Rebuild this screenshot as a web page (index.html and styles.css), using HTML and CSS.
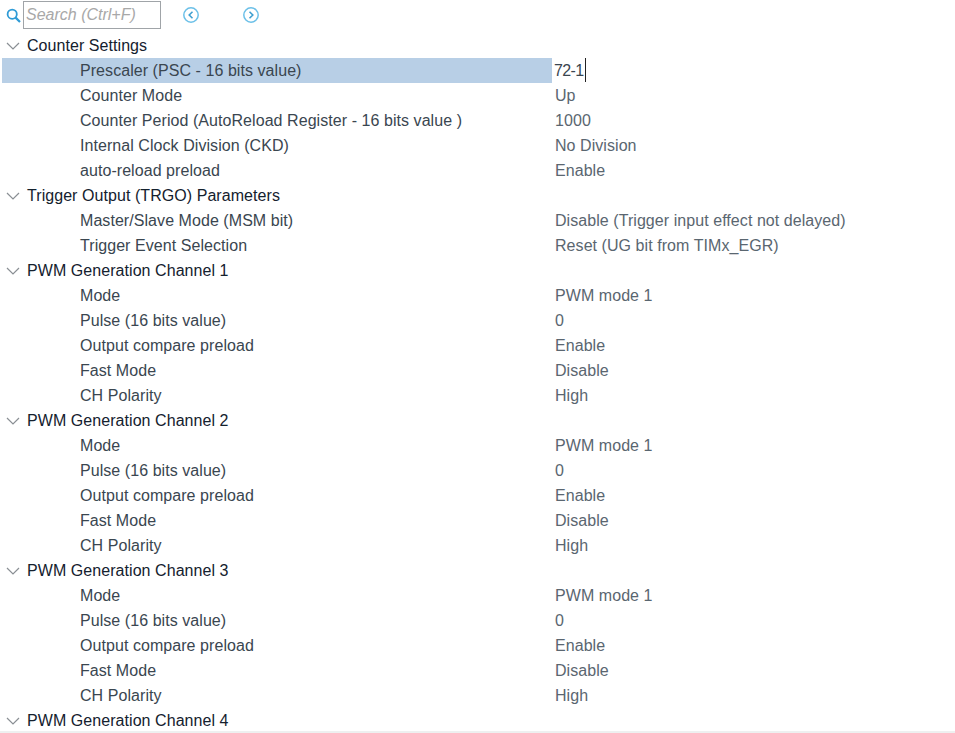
FILE: index.html
```html
<!DOCTYPE html>
<html lang="en">
<head>
    <meta charset="UTF-8">
    <title>Parameter Settings</title>
    <link rel="stylesheet" href="styles.css">
</head>
<body>

    <!-- Search bar -->
    <div class="toolbar">
        <svg class="search-icon" width="15" height="15" viewBox="0 0 15 15">
            <circle cx="6.2" cy="6.2" r="4.6" fill="none" stroke="#2f9bd6" stroke-width="1.8"/>
            <line x1="9.6" y1="9.6" x2="14" y2="14" stroke="#2f9bd6" stroke-width="2.2"/>
        </svg>
        <div class="search-box">Search (Ctrl+F)</div>
        <svg class="nav-icon" width="18" height="18" viewBox="0 0 18 18">
            <circle cx="9" cy="9" r="7.2" fill="none" stroke="#6cc0e8" stroke-width="1.5"/>
            <polyline points="10.5,5.8 7.2,9 10.5,12.2" fill="none" stroke="#3f9fd0" stroke-width="1.6"/>
        </svg>
        <svg class="nav-icon" width="18" height="18" viewBox="0 0 18 18">
            <circle cx="9" cy="9" r="7.2" fill="none" stroke="#6cc0e8" stroke-width="1.5"/>
            <polyline points="7.5,5.8 10.8,9 7.5,12.2" fill="none" stroke="#3f9fd0" stroke-width="1.6"/>
        </svg>
    </div>

    <!-- Parameter tree -->
    <div class="tree">
        <div class="group"><svg class="chevron" width="14" height="8" viewBox="0 0 14 8"><polyline points="1,1 7,7 13,1"/></svg>Counter Settings</div>
        <div class="row selected"><span class="name">Prescaler (PSC - 16 bits value)</span><span class="value editing">72-1</span></div>
        <div class="row"><span class="name">Counter Mode</span><span class="value">Up</span></div>
        <div class="row"><span class="name">Counter Period (AutoReload Register - 16 bits value )</span><span class="value">1000</span></div>
        <div class="row"><span class="name">Internal Clock Division (CKD)</span><span class="value">No Division</span></div>
        <div class="row"><span class="name">auto-reload preload</span><span class="value">Enable</span></div>

        <div class="group"><svg class="chevron" width="14" height="8" viewBox="0 0 14 8"><polyline points="1,1 7,7 13,1"/></svg>Trigger Output (TRGO) Parameters</div>
        <div class="row"><span class="name">Master/Slave Mode (MSM bit)</span><span class="value">Disable (Trigger input effect not delayed)</span></div>
        <div class="row"><span class="name">Trigger Event Selection</span><span class="value">Reset (UG bit from TIMx_EGR)</span></div>

        <div class="group"><svg class="chevron" width="14" height="8" viewBox="0 0 14 8"><polyline points="1,1 7,7 13,1"/></svg>PWM Generation Channel 1</div>
        <div class="row"><span class="name">Mode</span><span class="value">PWM mode 1</span></div>
        <div class="row"><span class="name">Pulse (16 bits value)</span><span class="value">0</span></div>
        <div class="row"><span class="name">Output compare preload</span><span class="value">Enable</span></div>
        <div class="row"><span class="name">Fast Mode</span><span class="value">Disable</span></div>
        <div class="row"><span class="name">CH Polarity</span><span class="value">High</span></div>

        <div class="group"><svg class="chevron" width="14" height="8" viewBox="0 0 14 8"><polyline points="1,1 7,7 13,1"/></svg>PWM Generation Channel 2</div>
        <div class="row"><span class="name">Mode</span><span class="value">PWM mode 1</span></div>
        <div class="row"><span class="name">Pulse (16 bits value)</span><span class="value">0</span></div>
        <div class="row"><span class="name">Output compare preload</span><span class="value">Enable</span></div>
        <div class="row"><span class="name">Fast Mode</span><span class="value">Disable</span></div>
        <div class="row"><span class="name">CH Polarity</span><span class="value">High</span></div>

        <div class="group"><svg class="chevron" width="14" height="8" viewBox="0 0 14 8"><polyline points="1,1 7,7 13,1"/></svg>PWM Generation Channel 3</div>
        <div class="row"><span class="name">Mode</span><span class="value">PWM mode 1</span></div>
        <div class="row"><span class="name">Pulse (16 bits value)</span><span class="value">0</span></div>
        <div class="row"><span class="name">Output compare preload</span><span class="value">Enable</span></div>
        <div class="row"><span class="name">Fast Mode</span><span class="value">Disable</span></div>
        <div class="row"><span class="name">CH Polarity</span><span class="value">High</span></div>

        <div class="group"><svg class="chevron" width="14" height="8" viewBox="0 0 14 8"><polyline points="1,1 7,7 13,1"/></svg>PWM Generation Channel 4</div>
    </div>

    <div class="bottom-line"></div>

</body>
</html>
```

FILE: styles.css
```css
/* General Styles */
body {
    font-family: 'Liberation Sans', Arial, sans-serif;
    font-size: 16px;
    letter-spacing: 0.06px;
    background-color: #fff;
    color: #1f2a36;
    margin: 0;
    height: 733px;
    overflow: hidden;
}

/* Search bar */
.toolbar {
    display: flex;
    align-items: center;
    height: 33px;
    padding-left: 6px;
    padding-bottom: 3px;
    box-sizing: border-box;
}

.search-icon {
    margin-right: 2px;
}

.search-box {
    width: 138px;
    height: 28px;
    box-sizing: border-box;
    border: 1px solid #a0a4a8;
    padding-left: 2px;
    line-height: 26px;
    font-style: italic;
    letter-spacing: 0;
    color: #a8a8a8;
}

.nav-icon {
    margin-left: 21px;
}

.nav-icon + .nav-icon {
    margin-left: 42px;
}

/* Tree rows */
.group, .row {
    height: 25px;
    line-height: 25px;
    white-space: nowrap;
}

.group {
    display: flex;
    align-items: center;
    padding-left: 6px;
    color: #14212e;
}

.chevron {
    margin-right: 7px;
}

.chevron polyline {
    fill: none;
    stroke: #8a8f94;
    stroke-width: 1.2;
}

.row {
    display: flex;
    color: #3a4650;
}

.name {
    width: 550px;
    margin-left: 2px;
    padding-left: 78px;
    box-sizing: border-box;
}

.value {
    padding-left: 3px;
    color: #5a6670;
}

.selected .name {
    background-color: #b8cfe6;
}

.editing {
    height: 24px;
    border-right: 1px solid #222;
    padding-left: 2px;
    padding-right: 1px;
    letter-spacing: -0.6px;
    color: #3a4650;
}

.bottom-line {
    position: absolute;
    left: 0;
    right: 0;
    top: 731px;
    height: 2px;
    background-color: #eef0f0;
}
```
